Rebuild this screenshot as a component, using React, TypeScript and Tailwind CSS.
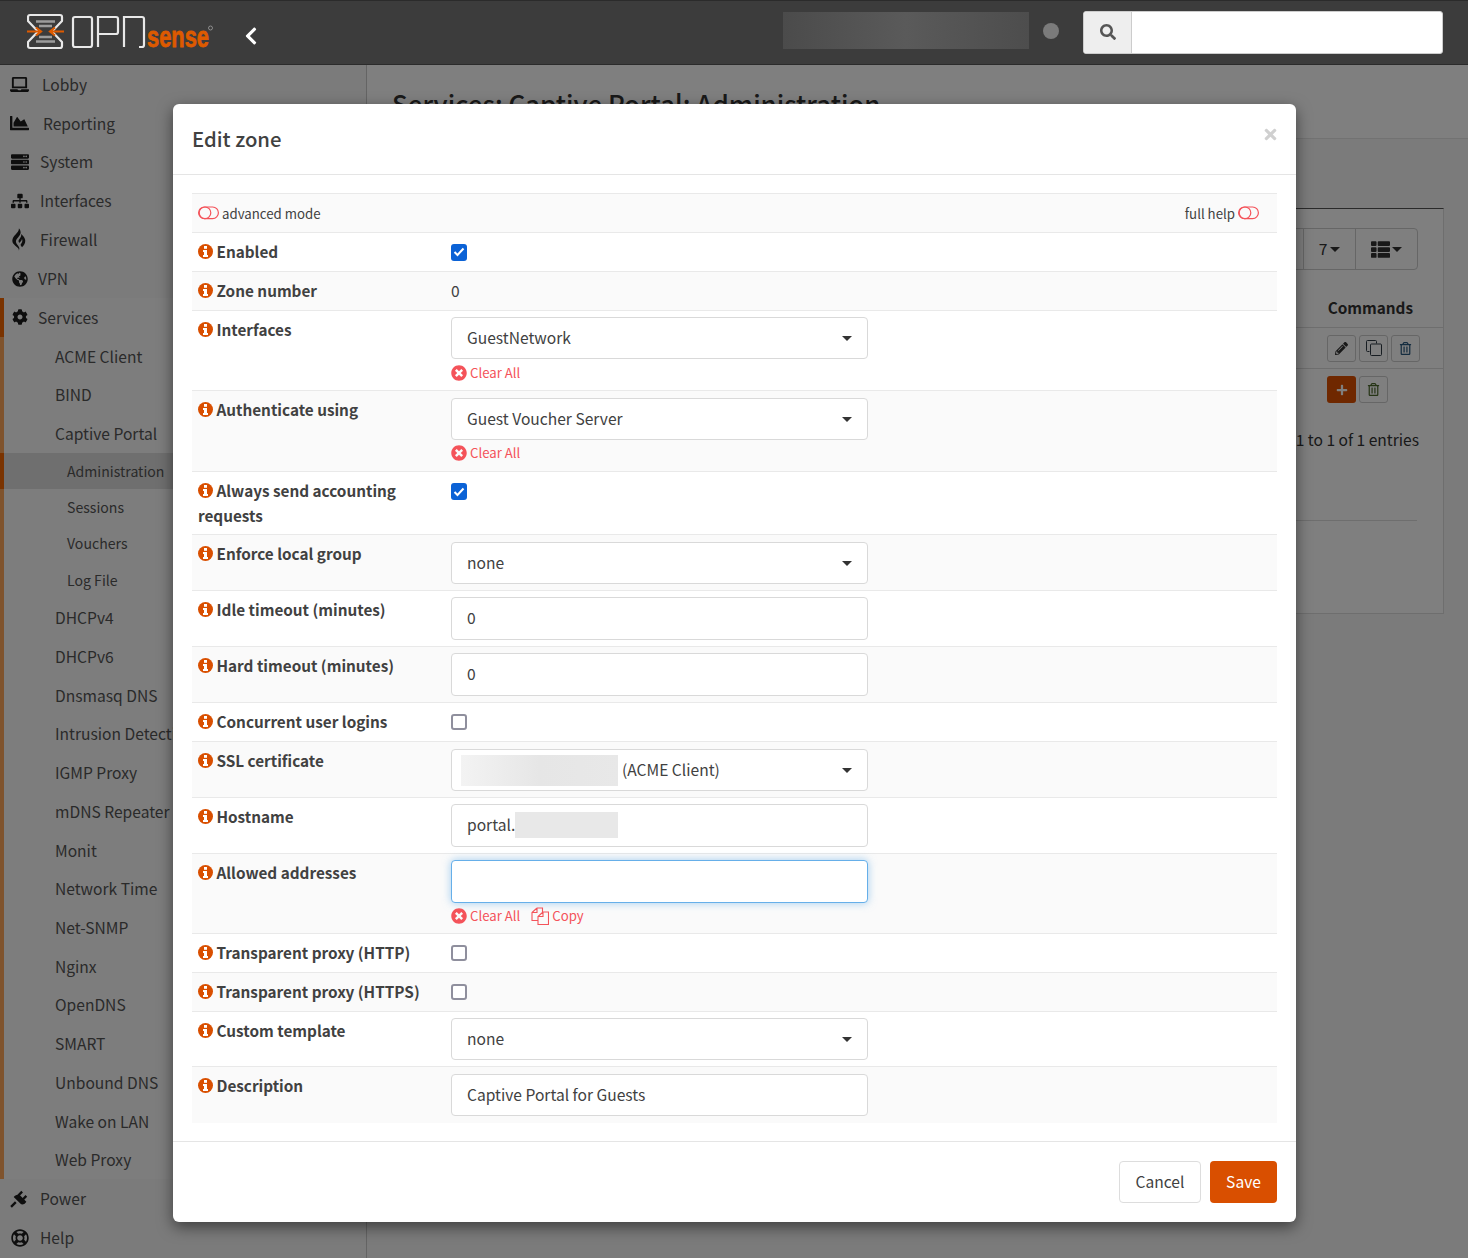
import {
  FaChartArea,
  FaChevronLeft,
  FaCog,
  FaGlobeAmericas,
  FaGripfire,
  FaLaptop,
  FaPencilAlt,
  FaPlus,
  FaRegLifeRing,
  FaRegTrashAlt,
  FaSearch,
  FaServer,
  FaSitemap,
  FaThList,
  FaTimes,
  FaTimesCircle,
} from "react-icons/fa";
import type { ReactNode } from "react";

const font = "font-['Noto_Sans_CJK_JP','Source_Sans_Pro',Lato,sans-serif]";

function Logo() {
  return (
    <svg width="200" height="40" viewBox="0 0 200 40" className="shrink-0">
      <g fill="none" stroke="#e8e8e8" strokeWidth="2.2">
        <path d="M3 2h30a2 2 0 0 1 2 2v4L25 18.500 35 29v4a2 2 0 0 1-2 2H3a2 2 0 0 1-2-2v-4l10-10.500L1 8V4a2 2 0 0 1 2-2z" strokeLinejoin="round" />
        <path d="M48 4h15a2 2 0 0 1 2 2v26a2 2 0 0 1-2 2H48a2 2 0 0 1-2-2V6a2 2 0 0 1 2-2z" />
        <path d="M71 34V4h18a2 2 0 0 1 2 2v13a2 2 0 0 1-2 2H71" />
        <path d="M97 34V4h18a2 2 0 0 1 2 2v26a2 2 0 0 1-2 2h-3" />
      </g>
      <path d="M9 8.500h19M12 13l13 0M12 24h13M9 28.500h19" stroke="#9c9c9c" strokeWidth="2.6" />
      <path d="M0 18.500h13M9 14.500l5 4-5 4M37 18.500H24M28 14.500l-5 4 5 4" fill="none" stroke="#dd5a00" strokeWidth="2.200" />
      <text
        x="120"
        y="34"
        textLength="62"
        lengthAdjust="spacingAndGlyphs"
        fill="#dd5a00"
        stroke="#dd5a00"
        strokeWidth="0.8"
        fontSize="30"
        fontWeight="700"
        fontFamily="Liberation Sans, sans-serif"
      >
        sense
      </text>
      <circle cx="183.500" cy="15" r="2" fill="none" stroke="#aaa" strokeWidth="0.7" />
    </svg>
  );
}

function Header() {
  return (
    <header className="relative z-30 flex h-[65px] items-center border-y border-[#2b2b2b] bg-[#3c3c3c]">
      <div className="ml-[27px] mt-[1px]">
        <Logo />
      </div>
      <FaChevronLeft className="ml-[14px] mt-[6px] text-[20px] text-white" />
      <div className="ml-auto flex items-center">
        <div className="mt-[-4px] h-[37px] w-[246px] bg-gradient-to-r from-[#4b4b4b] via-[#5a5a5a] to-[#4d4d4d]" />
        <div className="ml-[14px] mt-[-3px] h-[16px] w-[16px] rounded-full bg-[#7b7b7b]" />
        <div className="ml-[24px] mr-[25px] mt-[-1px] flex h-[43px] w-[360px] overflow-hidden rounded-[3px] border border-[#ccc] bg-white">
          <div className="flex w-[48px] items-center justify-center border-r border-[#ccc] bg-[#eee]">
            <FaSearch className="text-[16px] text-[#555]" />
          </div>
        </div>
      </div>
    </header>
  );
}

function PlugIcon() {
  return (
    <svg width="20" height="19" viewBox="0 0 18 18" fill="currentColor">
      <path d="M3.500 7.500l7 7c2.500.5 4-1 5-2.500l-7-7c-2 .5-4 1-5 2.500z" />
      <path d="M1 17l4.500-4.500M8 6l3.500-3.500M12 10l3.500-3.500" stroke="currentColor" strokeWidth="2.200" fill="none" />
    </svg>
  );
}

function TopItem({ icon, label, gap }: { icon: ReactNode; label: string; gap: string }) {
  return (
    <div className={`flex h-[38.85px] items-center pl-[10px] text-[15.6px] ${gap}`}>
      <span className="flex w-[19px] justify-center text-[#1c1c1c]">{icon}</span>
      <span>{label}</span>
    </div>
  );
}

const firstSub = ["ACME Client", "BIND", "Captive Portal"];
const captiveSub = ["Administration", "Sessions", "Vouchers", "Log File"];
const restSub = [
  "DHCPv4",
  "DHCPv6",
  "Dnsmasq DNS",
  "Intrusion Detection",
  "IGMP Proxy",
  "mDNS Repeater",
  "Monit",
  "Network Time",
  "Net-SNMP",
  "Nginx",
  "OpenDNS",
  "SMART",
  "Unbound DNS",
  "Wake on LAN",
  "Web Proxy",
];

function SubItem({ label }: { label: string }) {
  return (
    <div className="flex h-[38.72px] items-center border-l-4 border-[#ffa65a] pl-[51px] text-[15.6px]">{label}</div>
  );
}

function Sidebar() {
  return (
    <aside className="w-[367px] shrink-0 border-r border-[#c8c8c8] bg-[#f7f7f7] text-[#555]">
      <TopItem icon={<FaLaptop className="text-[19px]" />} label="Lobby" gap="gap-[13px]" />
      <TopItem icon={<FaChartArea className="text-[20px]" />} label="Reporting" gap="gap-[14px]" />
      <TopItem icon={<FaServer className="text-[18px]" />} label="System" gap="gap-[11px]" />
      <TopItem icon={<FaSitemap className="text-[18px]" />} label="Interfaces" gap="gap-[11px]" />
      <TopItem icon={<FaGripfire className="text-[23px]" />} label="Firewall" gap="gap-[11px]" />
      <TopItem icon={<FaGlobeAmericas className="text-[16px]" />} label="VPN" gap="gap-[9px]" />
      <div className="bg-[#fbfbfb]">
        <div className="flex h-[38.8px] items-center gap-[9px] border-l-4 border-[#f56600] pl-[6px] text-[15.6px]">
          <span className="flex w-[19px] justify-center text-[#1c1c1c]">
            <FaCog className="text-[16px]" />
          </span>
          <span>Services</span>
        </div>
        {firstSub.map((s) => (
          <SubItem key={s} label={s} />
        ))}
        {captiveSub.map((s, i) => (
          <div
            key={s}
            className={`flex h-[36.4px] items-center border-l-4 pl-[63px] text-[14.1px] ${
              i === 0 ? "border-[#f56600] bg-[#dedede]" : "border-[#ffa65a]"
            }`}
          >
            {s}
          </div>
        ))}
        {restSub.map((s) => (
          <SubItem key={s} label={s} />
        ))}
      </div>
      <TopItem icon={<PlugIcon />} label="Power" gap="gap-[11px]" />
      <TopItem icon={<FaRegLifeRing className="text-[18px]" />} label="Help" gap="gap-[11px]" />
    </aside>
  );
}

function IconBtn({ children }: { children: ReactNode }) {
  return (
    <div className="flex h-[27px] w-[29px] items-center justify-center rounded-[3px] border border-[#ccc] bg-white">
      {children}
    </div>
  );
}

function Content() {
  return (
    <main className="min-w-0 flex-1 overflow-hidden bg-[#f7f7f7]">
      <div className="h-[74px] border-b border-[#e5e5e5] bg-white px-[25px] pt-[18px] text-[25.9px] leading-[40px] font-medium whitespace-nowrap text-[#333]">
        Services: Captive Portal: Administration
      </div>
      <div className="ml-[26px] mt-[69px] mr-[24px] h-[406px] border border-[#ddd] border-t-[#555] bg-white pr-[26px]">
        <div className="mr-[-1px] flex justify-end pt-[19px]">
          <div className="flex h-[42px] rounded-[4px] border border-[#ccc] bg-white text-[15.6px] text-[#333]">
            <div className="w-[60px] border-r border-[#ccc]" />
            <div className="flex w-[52px] items-center justify-center gap-[3px] border-r border-[#ccc]">
              7<span className="mt-[1px] border-x-[5px] border-t-[5px] border-x-transparent border-t-[#333]" />
            </div>
            <div className="flex w-[61px] items-center justify-center gap-[2px]">
              <FaThList className="text-[19px]" />
              <span className="border-x-[5px] border-t-[5px] border-x-transparent border-t-[#333]" />
            </div>
          </div>
        </div>
        <div className="mr-[-26px] mt-[20px] flex h-[38px] items-center justify-end border-b border-[#ddd] pb-[2px] pr-[30px] text-[15.300px] font-semibold text-[#333]">
          Commands
        </div>
        <div className="mr-[-26px] flex h-[41px] items-center justify-end gap-[3px] border-b border-[#ddd] pr-[23px]">
          <IconBtn>
            <FaPencilAlt className="text-[13px] text-[#333]" />
          </IconBtn>
          <IconBtn>
            <svg width="16" height="16" viewBox="0 0 16 16" fill="none" stroke="#2f3a44" strokeWidth="1">
              <path d="M3.500 11.500h-2a1 1 0 0 1-1-1v-9a1 1 0 0 1 1-1h8a1 1 0 0 1 1 1v2" />
              <rect x="4.500" y="4" width="11" height="11.500" rx="1" />
            </svg>
          </IconBtn>
          <IconBtn>
            <FaRegTrashAlt className="text-[13px] text-[#2a5a80]" />
          </IconBtn>
        </div>
        <div className="flex h-[41px] items-center justify-end gap-[3px] pr-[29px]">
          <div className="flex h-[27px] w-[29px] items-center justify-center rounded-[3px] bg-[#de5000]">
            <FaPlus className="text-[12px] text-white" />
          </div>
          <IconBtn>
            <FaRegTrashAlt className="text-[13px] text-[#4d6a2d]" />
          </IconBtn>
        </div>
        <div className="mr-[-2px] mt-[19px] text-right text-[15.6px] leading-[20px] text-[#333]">
          Showing 1 to 1 of 1 entries
        </div>
        <div className="mt-[71px] border-t border-[#ddd]" />
      </div>
    </main>
  );
}

function Toggle() {
  return (
    <svg width="21" height="14" viewBox="0 0 21 14" fill="none" stroke="#f4535a" strokeWidth="1.2">
      <rect x="0.6" y="1" width="19.8" height="11.6" rx="5.8" />
      <circle cx="7" cy="6.8" r="5.8" />
    </svg>
  );
}

function Info() {
  return (
    <svg width="15" height="15" viewBox="0 0 15 15" className="inline-block align-[-1px]">
      <circle cx="7.500" cy="7.500" r="7.500" fill="#d94f00" />
      <rect x="6" y="2" width="3" height="2.800" fill="#fff" />
      <path d="M5 6h4v5h1v2H5v-2h1V8H5z" fill="#fff" />
    </svg>
  );
}

function ClearAll() {
  return (
    <span className="flex items-center gap-[3px] text-[#f4535a]">
      <FaTimesCircle className="text-[16px]" />
      <span className="text-[13.2px]">Clear All</span>
    </span>
  );
}

function CopyLink() {
  return (
    <span className="ml-[11px] flex items-center gap-[3px] text-[#f4535a]">
      <svg width="18" height="18" viewBox="0 0 18 18" fill="none" stroke="currentColor" strokeWidth="1.1">
        <path d="M6 1L1 5.500v8h6M6 1v4.500H1M6 1h5.500v4" />
        <path d="M12 5L7 9.500v8h10.500V5zM12 5v4.500H7" />
      </svg>
      <span className="text-[13.2px]">Copy</span>
    </span>
  );
}

function Select({ value }: { value: ReactNode }) {
  return (
    <div className="flex h-[42px] w-[417px] items-center justify-between rounded-[4px] border border-[#d9d9d9] bg-white pl-[15px] pr-[15px] text-[15.6px]">
      <span className="flex items-center">{value}</span>
      <span className="border-x-[5px] border-t-[5px] border-x-transparent border-t-[#333]" />
    </div>
  );
}

function Input({ value, focus = false, h = "h-[43px] pb-[1px]" }: { value?: ReactNode; focus?: boolean; h?: string }) {
  return (
    <div
      className={`flex w-[417px] items-center rounded-[4px] border bg-white pl-[15px] text-[15.6px] ${h} ${
        focus ? "border-[#66afe9] shadow-[0_0_8px_rgba(102,175,233,0.6)]" : "border-[#d9d9d9]"
      }`}
    >
      {value}
    </div>
  );
}

function Check({ on = false }: { on?: boolean }) {
  if (on) {
    return (
      <span className="flex h-[17px] w-[16px] items-center justify-center rounded-[3px] bg-[#0b62d6]">
        <svg width="12" height="10" viewBox="0 0 12 10" fill="none" stroke="#fff" strokeWidth="2">
          <path d="M1.500 5l3 3 6-6.500" />
        </svg>
      </span>
    );
  }
  return <span className="h-[16px] w-[16px] rounded-[3px] border-2 border-[#8f8f9d] bg-white" />;
}

function Row({
  h,
  label,
  children,
  striped,
  center,
  top = "pt-[6px]",
  last,
}: {
  h: string;
  label: ReactNode;
  children?: ReactNode;
  striped?: boolean;
  center?: boolean;
  top?: string;
  last?: boolean;
}) {
  return (
    <div
      className={`flex border-b ${h} ${last ? "border-transparent" : "border-[#e9e9e9]"} ${
        striped ? "bg-[#fafafa]" : "bg-white"
      }`}
    >
      <div className="w-[259px] shrink-0 pl-[6px] pr-[20px] pt-[6px] text-[15.3px] leading-[25px] font-semibold">
        <Info /> {label}
      </div>
      <div className={`min-w-0 flex-1 ${center ? "flex items-center" : top}`}>{children}</div>
    </div>
  );
}

function Modal() {
  return (
    <div className="absolute left-[173px] top-[104px] z-20 h-[1118px] w-[1123px] rounded-[6px] bg-white text-[#414141] shadow-[0_5px_15px_rgba(0,0,0,0.5)]">
      <div className="flex h-[71px] items-start justify-between border-b border-[#e5e5e5] pl-[19px] pr-[17px] pt-[19px]">
        <div className="text-[20.3px] leading-[31px] font-medium">Edit zone</div>
        <FaTimes className="mt-[3px] text-[17px] text-[#d0d0d0]" />
      </div>
      <div className="px-[19px] pt-[18px]">
        <div className="border-t border-[#e9e9e9]">
          <div className="flex h-[39px] items-center justify-between border-b border-[#e9e9e9] bg-[#fafafa] pl-[6px] pr-[18px] text-[13.26px]">
            <span className="flex items-center gap-[3px]">
              <Toggle />
              <span className="mt-[2px]">advanced mode</span>
            </span>
            <span className="flex items-center gap-[3px]">
              <span className="mt-[2px]">full help</span>
              <Toggle />
            </span>
          </div>
          <Row h="h-[39px]" label="Enabled" center>
            <Check on />
          </Row>
          <Row h="h-[39px]" label="Zone number" striped center>
            <span className="mt-[-1px] text-[15.6px]">0</span>
          </Row>
          <Row h="h-[80px]" label="Interfaces">
            <Select value="GuestNetwork" />
            <div className="mt-[4px]">
              <ClearAll />
            </div>
          </Row>
          <Row h="h-[81px]" label="Authenticate using" striped top="pt-[7px]">
            <Select value="Guest Voucher Server" />
            <div className="mt-[3px]">
              <ClearAll />
            </div>
          </Row>
          <Row h="h-[63px]" label="Always send accounting requests" top="pt-[11px]">
            <Check on />
          </Row>
          <Row h="h-[56px]" label="Enforce local group" striped top="pt-[7px]">
            <Select value="none" />
          </Row>
          <Row h="h-[56px]" label="Idle timeout (minutes)">
            <Input value="0" />
          </Row>
          <Row h="h-[56px]" label="Hard timeout (minutes)" striped>
            <Input value="0" />
          </Row>
          <Row h="h-[39px]" label="Concurrent user logins" center>
            <Check />
          </Row>
          <Row h="h-[56px]" label="SSL certificate" striped top="pt-[7px]">
            <Select
              value={
                <>
                  <span className="ml-[-6px] mr-[4px] h-[31px] w-[157px] bg-gradient-to-r from-[#f3f3f3] via-[#e6e6e6] to-[#e8e8e8]" />
                  (ACME Client)
                </>
              }
            />
          </Row>
          <Row h="h-[56px]" label="Hostname">
            <Input
              value={
                <>
                  portal.
                  <span className="h-[26px] w-[103px] bg-[#e8e8e8]" />
                </>
              }
            />
          </Row>
          <Row h="h-[80px]" label="Allowed addresses" striped>
            <Input focus />
            <div className="mt-[3px] flex">
              <ClearAll />
              <CopyLink />
            </div>
          </Row>
          <Row h="h-[39px]" label="Transparent proxy (HTTP)" center>
            <Check />
          </Row>
          <Row h="h-[39px]" label="Transparent proxy (HTTPS)" striped center>
            <Check />
          </Row>
          <Row h="h-[55px]" label="Custom template">
            <Select value="none" />
          </Row>
          <Row h="h-[56px]" label="Description" striped top="pt-[7px]" last>
            <Input value="Captive Portal for Guests" h="h-[42px]" />
          </Row>
        </div>
      </div>
      <div className="mt-[18px] flex h-[81px] items-start justify-end gap-[9px] border-t border-[#e5e5e5] pr-[19px] pt-[19px] text-[15.6px]">
        <div className="flex h-[42px] w-[82px] items-center justify-center rounded-[4px] border border-[#ddd] bg-white">
          Cancel
        </div>
        <div className="flex h-[42px] w-[67px] items-center justify-center rounded-[4px] bg-[#d94f00] text-white">
          Save
        </div>
      </div>
    </div>
  );
}

export default function App() {
  return (
    <div className={`relative h-[1258px] w-[1468px] overflow-hidden ${font}`}>
      <Header />
      <div className="flex h-[1193px]">
        <Sidebar />
        <Content />
      </div>
      <div className="absolute inset-0 z-10 bg-black/50" />
      <Modal />
    </div>
  );
}
